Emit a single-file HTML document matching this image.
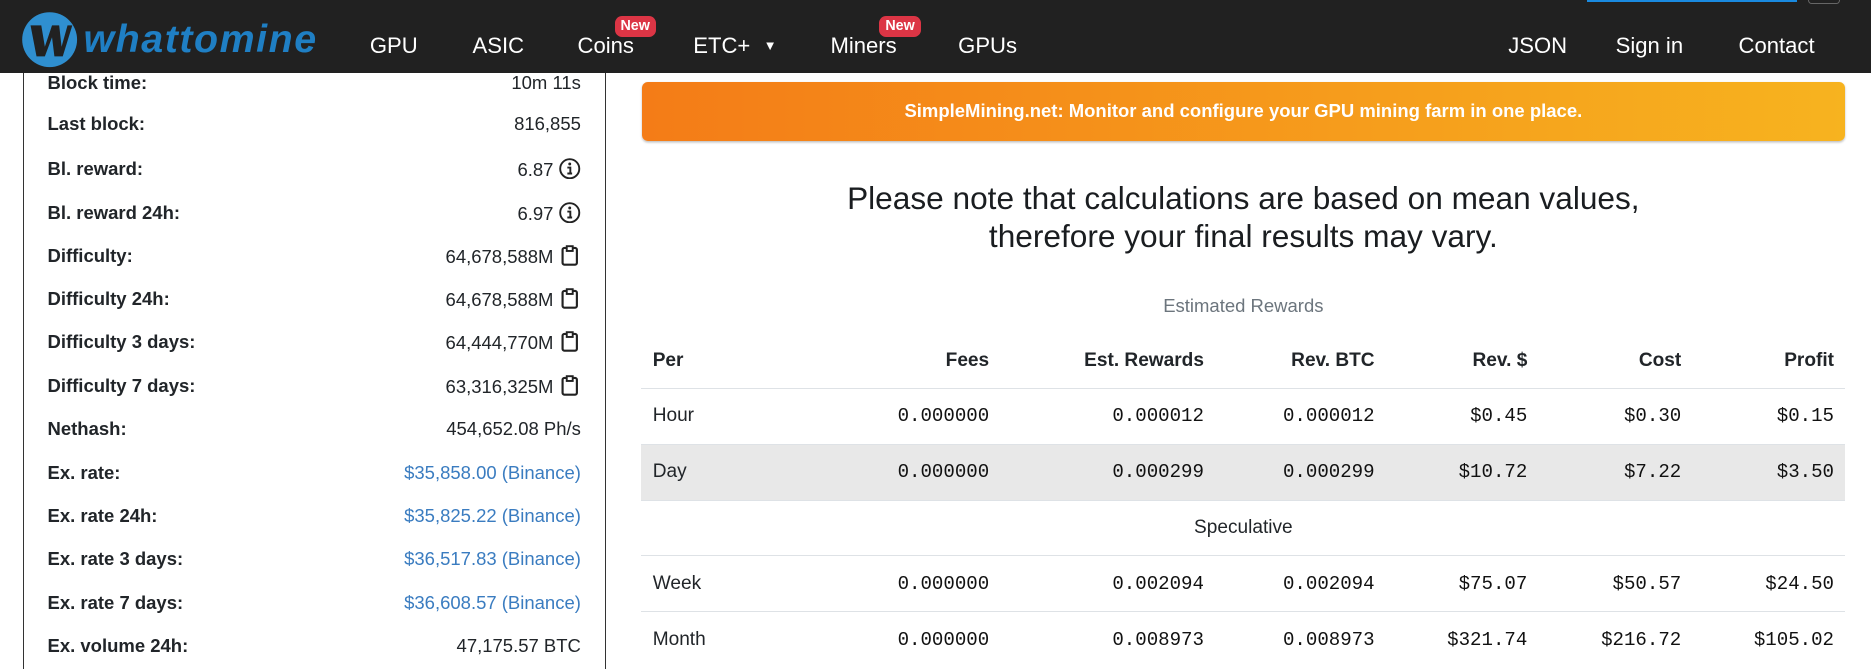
<!DOCTYPE html>
<html><head><meta charset="utf-8"><style>
html,body{margin:0;padding:0;background:#fff;overflow:hidden}
body{width:1568px;height:561px;zoom:1.19324;position:relative;font-family:"Liberation Sans",sans-serif;color:#212529}
.a{position:absolute;white-space:nowrap}
nav{position:absolute;left:0;top:0;width:1568px;height:61px;background:#212121}
.n{position:absolute;top:28px;color:#fff;font-size:18.5px}
.new{position:absolute;top:13px;background:#dc3545;color:#fff;font-size:12px;font-weight:bold;padding:2px 5px;border-radius:6px;line-height:14px}
.lp{position:absolute;left:19px;top:61px;width:487px;height:500px;border-left:1px solid #333;border-right:1px solid #333}
.row{position:absolute;left:20px;width:447px;font-size:15.5px}
.row b{position:absolute;left:0}
.row span{position:absolute;right:0}
.lk{color:#3a7cc0}
.ic{display:inline-block;vertical-align:-3px;margin-left:5px}
table{position:absolute;left:537px;top:280px;width:1009px;border-collapse:collapse;font-size:16px;table-layout:fixed}
td,th{height:46px;padding:0 9px 0 10px;text-align:right;border-top:1px solid #dee2e6}
th{border-top:none;height:45px}
td:first-child,th:first-child{text-align:left}
td.m{font-family:"Liberation Mono",monospace;font-size:16px;color:#111}
</style></head><body>
<nav>
<svg class="a" style="left:18px;top:9px" width="48" height="48" viewBox="0 0 48 48"><circle cx="24" cy="24" r="23" fill="#2f8fd0"/><path d="M8 12h9l3 18 6-18h6l2 18 5-18h4l-8 26h-7l-2-16-6 16h-7z" fill="#212121"/></svg>
<div class="a" style="left:70px;top:14px;font-size:33px;font-weight:bold;font-style:italic;color:#1f7fc4;letter-spacing:1.3px">whattomine</div>
<div class="n" style="left:310px">GPU</div>
<div class="n" style="left:396px">ASIC</div>
<div class="n" style="left:484px">Coins</div><div class="new" style="left:515px">New</div>
<div class="n" style="left:581px">ETC+ <span style="font-size:11px;margin-left:6px;vertical-align:3px">▼</span></div>
<div class="n" style="left:696px">Miners</div><div class="new" style="left:737px">New</div>
<div class="n" style="left:803px">GPUs</div>
<div class="n" style="left:1264px">JSON</div>
<div class="n" style="left:1354px">Sign in</div>
<div class="n" style="left:1457px">Contact</div>
<div class="a" style="left:1330px;top:0;width:176px;height:2px;background:#1a8ae0"></div>
<div class="a" style="left:1515px;top:-4px;width:25px;height:6px;border:1px solid #666;border-radius:3px"></div>
</nav>
<div class="lp">
<div class="row" style="top:-1px"><b>Block time:</b><span>10m 11s</span></div>
<div class="row" style="top:34px"><b>Last block:</b><span>816,855</span></div>
<div class="row" style="top:71px"><b>Bl. reward:</b><span>6.87<svg class="ic" width="18" height="18" viewBox="0 0 18 18"><circle cx="9" cy="9" r="8" fill="none" stroke="#222" stroke-width="1.6"/><circle cx="9" cy="5" r="1.2" fill="#222"/><path d="M7 8h2.5v5M7 13h4" stroke="#222" stroke-width="1.6" fill="none"/></svg></span></div>
<div class="row" style="top:108px"><b>Bl. reward 24h:</b><span>6.97<svg class="ic" width="18" height="18" viewBox="0 0 18 18"><circle cx="9" cy="9" r="8" fill="none" stroke="#222" stroke-width="1.6"/><circle cx="9" cy="5" r="1.2" fill="#222"/><path d="M7 8h2.5v5M7 13h4" stroke="#222" stroke-width="1.6" fill="none"/></svg></span></div>
<div class="row" style="top:144px"><b>Difficulty:</b><span>64,678,588M<svg class="ic" width="18" height="18" viewBox="0 0 18 18"><rect x="3" y="2.5" width="12" height="14" rx="1.5" fill="none" stroke="#222" stroke-width="1.8"/><rect x="6.5" y="1" width="5" height="4" fill="#fff" stroke="#222" stroke-width="1.6"/></svg></span></div>
<div class="row" style="top:180px"><b>Difficulty 24h:</b><span>64,678,588M<svg class="ic" width="18" height="18" viewBox="0 0 18 18"><rect x="3" y="2.5" width="12" height="14" rx="1.5" fill="none" stroke="#222" stroke-width="1.8"/><rect x="6.5" y="1" width="5" height="4" fill="#fff" stroke="#222" stroke-width="1.6"/></svg></span></div>
<div class="row" style="top:216px"><b>Difficulty 3 days:</b><span>64,444,770M<svg class="ic" width="18" height="18" viewBox="0 0 18 18"><rect x="3" y="2.5" width="12" height="14" rx="1.5" fill="none" stroke="#222" stroke-width="1.8"/><rect x="6.5" y="1" width="5" height="4" fill="#fff" stroke="#222" stroke-width="1.6"/></svg></span></div>
<div class="row" style="top:253px"><b>Difficulty 7 days:</b><span>63,316,325M<svg class="ic" width="18" height="18" viewBox="0 0 18 18"><rect x="3" y="2.5" width="12" height="14" rx="1.5" fill="none" stroke="#222" stroke-width="1.8"/><rect x="6.5" y="1" width="5" height="4" fill="#fff" stroke="#222" stroke-width="1.6"/></svg></span></div>
<div class="row" style="top:289px"><b>Nethash:</b><span>454,652.08 Ph/s</span></div>
<div class="row" style="top:326px"><b>Ex. rate:</b><span class="lk">$35,858.00 (Binance)</span></div>
<div class="row" style="top:362px"><b>Ex. rate 24h:</b><span class="lk">$35,825.22 (Binance)</span></div>
<div class="row" style="top:398px"><b>Ex. rate 3 days:</b><span class="lk">$36,517.83 (Binance)</span></div>
<div class="row" style="top:435px"><b>Ex. rate 7 days:</b><span class="lk">$36,608.57 (Binance)</span></div>
<div class="row" style="top:471px"><b>Ex. volume 24h:</b><span>47,175.57 BTC</span></div>
</div>
<div class="a" style="left:538px;top:69px;width:1008px;height:49px;border-radius:5px;background:linear-gradient(90deg,#f47c17,#f7b31f);box-shadow:0 1px 2px rgba(0,0,0,.25);color:#fff;font-weight:bold;font-size:15.5px;text-align:center;line-height:49px">SimpleMining.net: Monitor and configure your GPU mining farm in one place.</div>
<div class="a" style="left:538px;top:150px;width:1008px;text-align:center;font-size:26.5px;line-height:32px;color:#1a1d20">Please note that calculations are based on mean values,<br>therefore your final results may vary.</div>
<div class="a" style="left:538px;top:247px;width:1008px;text-align:center;font-size:15.5px;color:#6c757d">Estimated Rewards</div>
<table>
<colgroup><col style="width:163px"><col style="width:138px"><col style="width:180px"><col style="width:143px"><col style="width:128px"><col style="width:129px"><col style="width:128px"></colgroup>
<tr><th>Per</th><th>Fees</th><th>Est. Rewards</th><th>Rev. BTC</th><th>Rev. $</th><th>Cost</th><th>Profit</th></tr>
<tr><td>Hour</td><td class="m">0.000000</td><td class="m">0.000012</td><td class="m">0.000012</td><td class="m">$0.45</td><td class="m">$0.30</td><td class="m">$0.15</td></tr>
<tr style="background:#e8e8e8"><td>Day</td><td class="m">0.000000</td><td class="m">0.000299</td><td class="m">0.000299</td><td class="m">$10.72</td><td class="m">$7.22</td><td class="m">$3.50</td></tr>
<tr><td colspan="7" style="text-align:center">Speculative</td></tr>
<tr><td>Week</td><td class="m">0.000000</td><td class="m">0.002094</td><td class="m">0.002094</td><td class="m">$75.07</td><td class="m">$50.57</td><td class="m">$24.50</td></tr>
<tr><td>Month</td><td class="m">0.000000</td><td class="m">0.008973</td><td class="m">0.008973</td><td class="m">$321.74</td><td class="m">$216.72</td><td class="m">$105.02</td></tr>
</table>
</body></html>
